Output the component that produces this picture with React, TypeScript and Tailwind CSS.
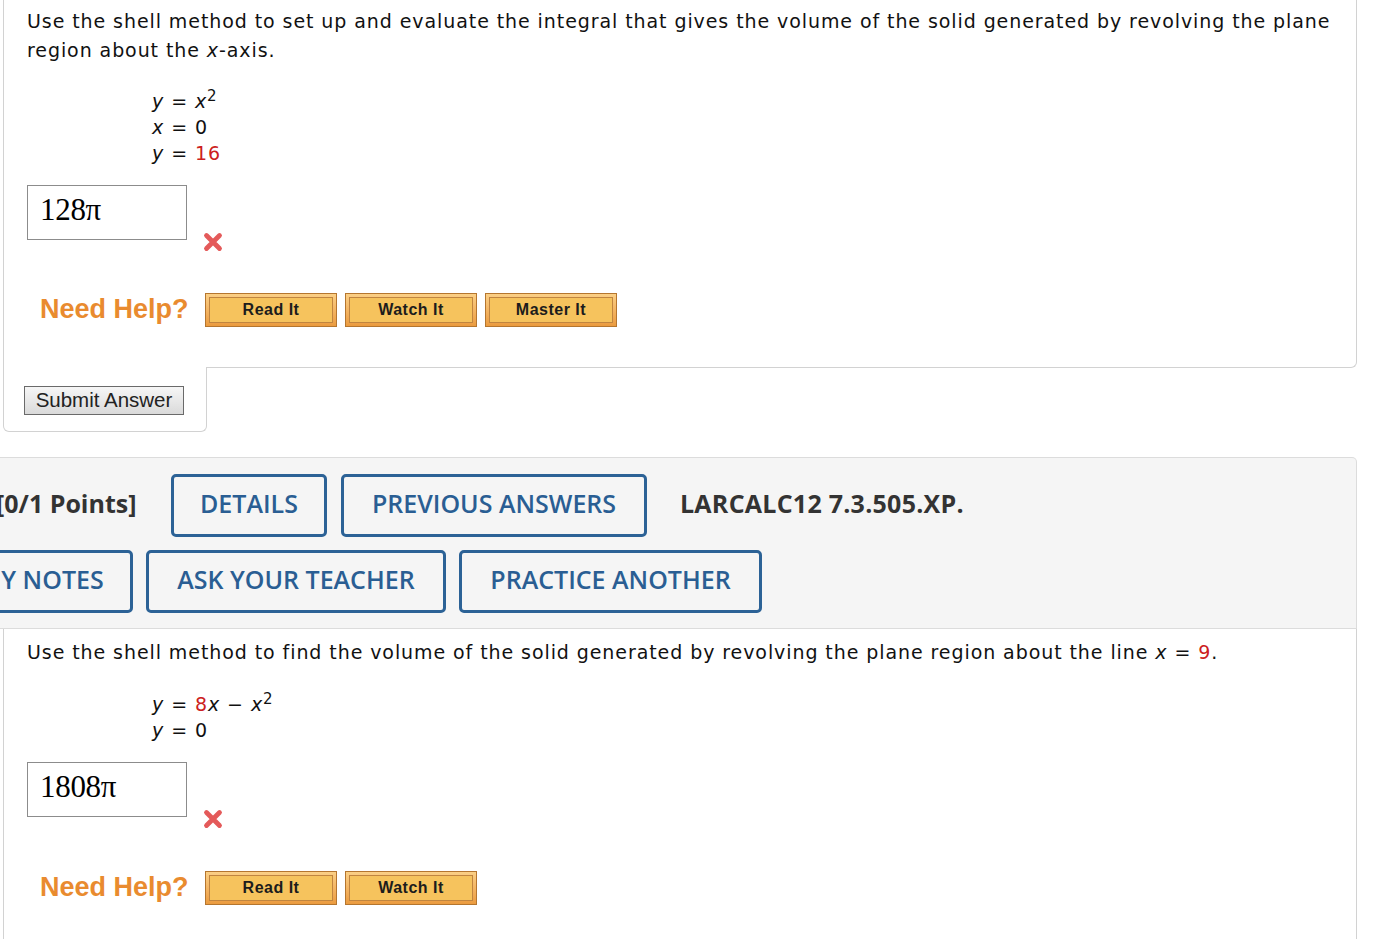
import React from 'react';

const bodyFont = "font-['DejaVu_Sans',Verdana,sans-serif]";

function RedX() {
  return (
    <svg width="20" height="20" viewBox="0 0 20 20" className="block shrink-0">
      <path d="M3.5 3.5 L16.5 16.5 M16.5 3.5 L3.5 16.5" stroke="#e45a5a" strokeWidth="4.8" strokeLinecap="round" />
    </svg>
  );
}

function AnswerBox({ value }: { value: string }) {
  return (
    <div className="flex items-start">
      <div className="flex h-[55px] w-[160px] items-center border border-[#8c8c8c] bg-white pb-[4px] pl-[12px] font-['Liberation_Serif',serif] text-[31px] tracking-[-0.3px] text-black">
        {value}
      </div>
      <div className="ml-[16px] mt-[47px] flex">
        <RedX />
      </div>
    </div>
  );
}

function HelpButton({ label }: { label: string }) {
  return (
    <div className="h-[34px] w-[132px] border border-[#b5762f] bg-gradient-to-b from-[#fbcf85] to-[#eb9b3f] p-[3px]">
      <div className="flex h-full w-full items-center justify-center border border-[#c08540] bg-[#f6c35d] font-['Liberation_Sans',Arial,sans-serif] text-[16px] font-bold tracking-[0.5px] text-[#1c1c1c]">
        {label}
      </div>
    </div>
  );
}

function NeedHelp({ buttons }: { buttons: string[] }) {
  return (
    <div className="flex items-center pl-[13px]">
      <span className="w-[165px] pb-[2px] font-['Liberation_Sans',Arial,sans-serif] text-[27px] font-bold leading-[30px] tracking-normal text-[#e98b2f]">
        Need Help?
      </span>
      <div className="flex gap-[8px]">
        {buttons.map((b) => (
          <HelpButton key={b} label={b} />
        ))}
      </div>
    </div>
  );
}

function BlueButton({ label, width, className = '' }: { label: string; width: string; className?: string }) {
  return (
    <div
      className={`flex h-[63px] shrink-0 items-center justify-center rounded-[5px] border-[3px] border-[#2c6296] pb-[3px] font-['Open_Sans',sans-serif] text-[25px] font-semibold text-[#2a5e93] ${width} ${className}`}
    >
      {label}
    </div>
  );
}

const I = ({ children }: { children: React.ReactNode }) => <i>{children}</i>;
const Red = ({ children }: { children: React.ReactNode }) => <span className="text-[#cc2020]">{children}</span>;

export default function App() {
  return (
    <div className={`relative h-[939px] w-[1382px] overflow-hidden bg-white text-[19px] tracking-[0.92px] text-[#111] ${bodyFont}`}>
      {/* first question card */}
      <div className="ml-[3px] w-[1354px]">
        <div className="box-border h-[368px] rounded-br-[6px] border-x border-b border-[#d2d2d2] pl-[23px] pt-[7px]">
          <p className="leading-[29px]">
            Use the shell method to set up and evaluate the integral that gives the volume of the solid generated by revolving the plane
            <br />
            region about the <I>x</I>-axis.
          </p>
          <div className="ml-[125px] mt-[23px] leading-[26px]">
            <div>
              <I>y</I> = <I>x</I>
              <sup className="text-[15px]">2</sup>
            </div>
            <div>
              <I>x</I> = 0
            </div>
            <div>
              <I>y</I> = <Red>16</Red>
            </div>
          </div>
          <div className="mt-[19px]">
            <AnswerBox value="128π" />
          </div>
          <div className="mt-[41px]">
            <NeedHelp buttons={['Read It', 'Watch It', 'Master It']} />
          </div>
        </div>
        <div className="-mt-px box-border h-[65px] w-[204px] rounded-b-[6px] border-x border-b border-[#d2d2d2] bg-white pl-[20px] pt-[19px]">
          <div className="flex h-[29px] w-[160px] items-center justify-center border border-[#6a6a6a] bg-gradient-to-b from-[#f6f6f6] to-[#dadada] font-['Liberation_Sans',Arial,sans-serif] text-[20.5px] tracking-normal text-[#222]">
            Submit Answer
          </div>
        </div>
      </div>

      {/* second question header */}
      <div className="mt-[25px] box-border h-[172px] w-[1357px] rounded-tr-[5px] border-y border-r border-[#dcdcdc] bg-[#f5f5f5] pt-[16px] font-['Open_Sans',sans-serif] tracking-normal">
        <div className="-ml-[4px] flex items-center">
          <span className="w-[175px] shrink-0 pb-[3px] text-[25px] font-bold text-[#333]">[0/1 Points]</span>
          <BlueButton label="DETAILS" width="w-[156px]" />
          <BlueButton label="PREVIOUS ANSWERS" width="w-[306px]" className="ml-[14px]" />
          <span className="ml-[33px] shrink-0 pb-[3px] text-[25px] font-bold tracking-[0.25px] text-[#333]">LARCALC12 7.3.505.XP.</span>
        </div>
        <div className="-ml-[51px] mt-[13px] flex items-center">
          <BlueButton label="MY NOTES" width="w-[184px]" />
          <BlueButton label="ASK YOUR TEACHER" width="w-[300px]" className="ml-[13px]" />
          <BlueButton label="PRACTICE ANOTHER" width="w-[303px]" className="ml-[13px]" />
        </div>
      </div>

      {/* second question body */}
      <div className="ml-[3px] box-border h-[320px] w-[1354px] border-x border-[#d2d2d2] pl-[23px] pt-[9px]">
        <p className="leading-[29px]">
          Use the shell method to find the volume of the solid generated by revolving the plane region about the line <I>x</I> ={' '}
          <Red>9</Red>.
        </p>
        <div className="ml-[125px] mt-[24px] leading-[26px]">
          <div>
            <I>y</I> = <Red>8</Red>
            <I>x</I> − <I>x</I>
            <sup className="text-[15px]">2</sup>
          </div>
          <div>
            <I>y</I> = 0
          </div>
        </div>
        <div className="mt-[19px]">
          <AnswerBox value="1808π" />
        </div>
        <div className="mt-[42px]">
          <NeedHelp buttons={['Read It', 'Watch It']} />
        </div>
      </div>
    </div>
  );
}
